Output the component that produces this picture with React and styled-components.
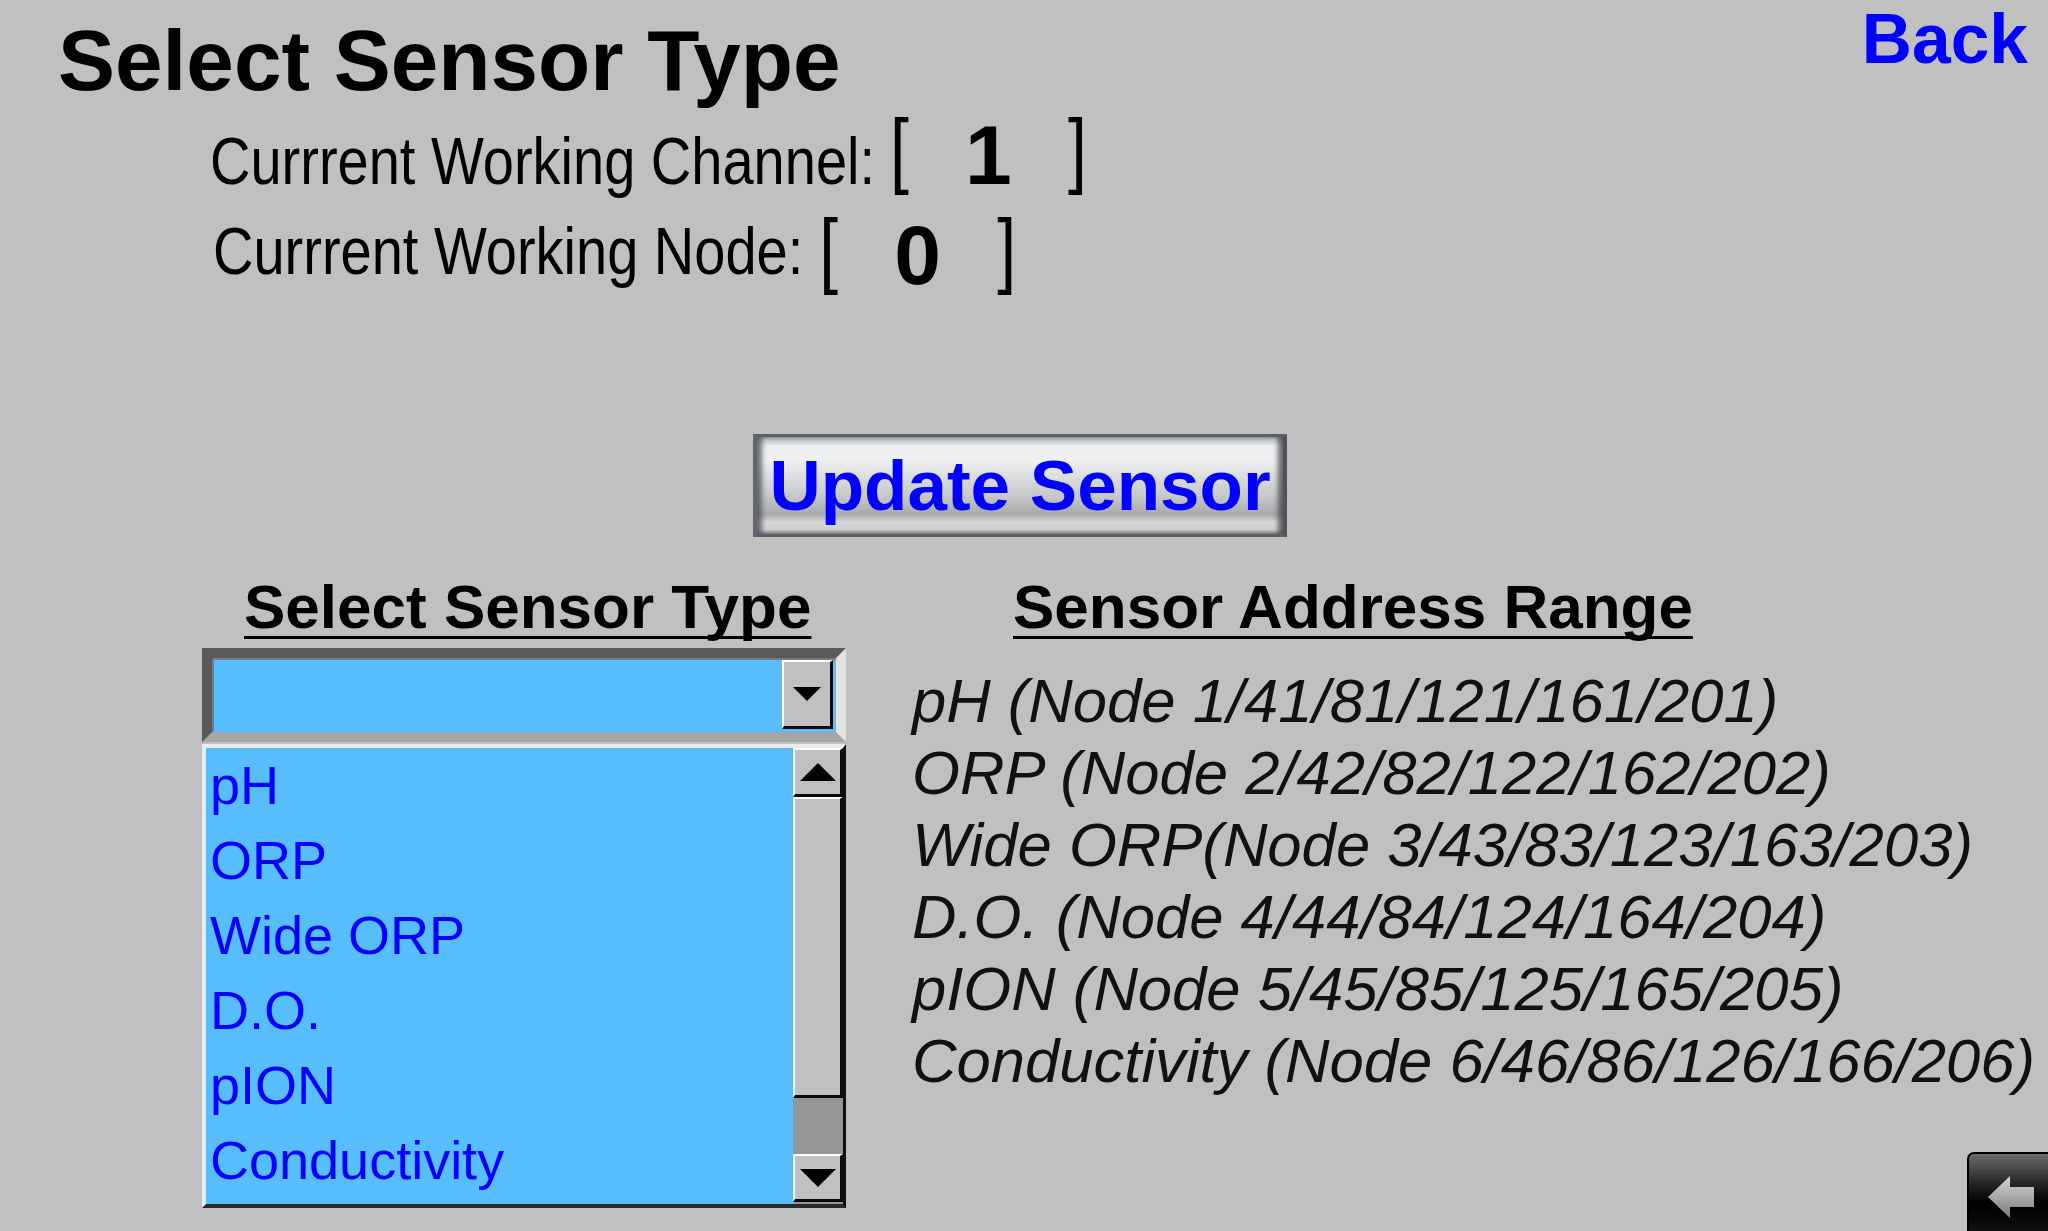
import React from 'react';
import styled, { createGlobalStyle } from 'styled-components';

const GlobalStyle = createGlobalStyle`
    html, body {
        margin: 0;
        padding: 0;
        background: #c0c0c0;
    }

    body {
        width: 2048px;
        height: 1231px;
        overflow: hidden;
        font-family: "Liberation Sans", Arial, sans-serif;
    }
`;

const Screen = styled.div`
    position: relative;
    width: 2048px;
    height: 1231px;
    background: #c0c0c0;
    overflow: hidden;
`;

const Header = styled.div`
    display: flex;
    justify-content: space-between;
    align-items: flex-start;
    padding: 0 20px 0 58px;
`;

const Title = styled.h1`
    margin: 19px 0 0;
    font-size: 85.5px;
    line-height: 84px;
    font-weight: bold;
    color: #000;
`;

const BackLink = styled.a`
    margin-top: 5px;
    font-size: 69.5px;
    line-height: 68px;
    font-weight: bold;
    color: #0000ff;
    text-decoration: none;
    cursor: pointer;
`;

const InfoBlock = styled.div`
    margin-top: 17px;
    padding-left: 210px;
`;

/* the panel font is a narrow face: a smaller size stretched upward from the baseline */
const InfoRow = styled.div`
    height: 90px;
    padding-left: ${props => props.$indent || 0}px;
    font-size: 56px;
    line-height: 90px;
    white-space: nowrap;
    color: #000;
`;

const Label = styled.span`
    display: inline-block;
    transform: scaleY(1.2);
    transform-origin: 0 64.4px;
`;

const ValueGroup = styled.span`
    display: inline-block;
    margin-left: ${props => props.$gap}px;
    line-height: 60px;
    vertical-align: ${props => props.$drop ? -props.$drop : 0}px;
`;

const Bracket = styled.span`
    display: inline-block;
    font-size: 68px;
    line-height: 60px;
    vertical-align: 6px;
    transform: scaleY(1.22);
    transform-origin: 50% 53.5px;
`;

const Value = styled.span`
    display: inline-block;
    width: 159px;
    text-align: center;
    font-size: 84px;
    font-weight: bold;
    line-height: 60px;
`;

const UpdateButton = styled.button`
    display: block;
    box-sizing: border-box;
    width: 534px;
    height: 103px;
    margin: 134px 0 0 753px;
    padding: 0;
    border-style: solid;
    border-width: 3px 4px;
    border-color: #5c6064 #505458 #5c6064 #63676b;
    background: linear-gradient(180deg,
        #a9acaf 0%,
        #eceef0 9%,
        #eef0f2 24%,
        #d6d7d9 46%,
        #c5c6c8 62%,
        #a8a9ab 80%,
        #d8d9db 88%,
        #cfd0d2 95%,
        #8c8f92 100%);
    box-shadow:
        inset 7px 0 5px -2px rgba(70, 74, 78, 0.75),
        inset -7px 0 5px -2px rgba(60, 64, 68, 0.75);
    font-family: "Liberation Sans", Arial, sans-serif;
    font-size: 71px;
    font-weight: bold;
    line-height: 67px;
    color: #0000ff;
    text-align: center;
    white-space: nowrap;
    cursor: pointer;
`;

const Lower = styled.div`
    display: grid;
    grid-template-columns: 644px 1fr;
    column-gap: 66px;
    margin-top: 35px;
    padding-left: 202px;
`;

const Column = styled.div`
    display: flex;
    flex-direction: column;
    align-items: flex-start;
`;

const SectionHeading = styled.h2`
    margin: 0 0 0 ${props => props.$indent}px;
    font-size: 62px;
    line-height: 70px;
    font-weight: bold;
    color: #000;
    white-space: nowrap;
    text-decoration: underline;
    text-decoration-thickness: 3px;
    text-underline-offset: 8px;
    text-decoration-skip-ink: none;
`;

const Combo = styled.div`
    box-sizing: border-box;
    display: flex;
    justify-content: flex-end;
    width: 644px;
    height: 94px;
    margin-top: 6px;
    padding: 2px 3px 3px 0;
    border-style: solid;
    border-width: 10px;
    border-color: #5a5a5a #e2e2e2 #a6a6a6 #5a5a5a;
    box-shadow: inset 2px 2px 0 #7a7a7a;
    background: #57bdfd;
`;

const ArrowButton = styled.div`
    box-sizing: border-box;
    display: flex;
    align-items: center;
    justify-content: center;
    width: ${props => props.$width || 51}px;
    height: ${props => props.$height ? `${props.$height}px` : 'auto'};
    background: #c0c0c0;
    border-style: solid;
    border-width: 2px 3px 3px 2px;
    border-color: #fdfdfd #0a0a0a #0a0a0a #fdfdfd;
`;

const Triangle = styled.span`
    width: 0;
    height: 0;
    border-left: ${props => props.$size}px solid transparent;
    border-right: ${props => props.$size}px solid transparent;
    ${props => props.$up
        ? `border-bottom: ${props.$tall}px solid #000;`
        : `border-top: ${props.$tall}px solid #000;`}
`;

const ListBox = styled.div`
    box-sizing: border-box;
    display: flex;
    width: 644px;
    height: 464px;
    margin-top: 2px;
    border-style: solid;
    border-width: 4px 3px 4px 4px;
    border-color: #ececec #111 #2a2a2a #ececec;
    background: #57bdfd;
`;

const Items = styled.ul`
    flex: 1;
    margin: 0;
    padding: 0 0 0 4px;
    list-style: none;
`;

const Item = styled.li`
    font-size: 54px;
    line-height: 75px;
    color: #0000ff;
    white-space: nowrap;
`;

const ScrollBar = styled.div`
    display: flex;
    flex-direction: column;
    width: 50px;
    padding-bottom: 2px;
    background: #969696;
`;

const Thumb = styled.div`
    box-sizing: border-box;
    height: 301px;
    background: #c0c0c0;
    border-style: solid;
    border-width: 2px 3px 3px 2px;
    border-color: #fdfdfd #0a0a0a #0a0a0a #fdfdfd;
`;

const Track = styled.div`
    flex: 1;
`;

const AddressList = styled.ul`
    margin: 23px 0 0;
    padding: 0;
    list-style: none;
`;

const AddressLine = styled.li`
    font-size: 61.6px;
    font-style: italic;
    line-height: 72px;
    color: #111;
    white-space: nowrap;
`;

const CornerButton = styled.div`
    position: absolute;
    right: -22px;
    bottom: -22px;
    box-sizing: border-box;
    display: flex;
    align-items: flex-start;
    width: 103px;
    height: 101px;
    padding: 21px 0 0 18px;
    border: 2px solid #000;
    border-radius: 7px 0 0 0;
    background: linear-gradient(180deg, #6c6c6c 0%, #262626 30%, #000 50%, #0c0c0c 75%, #2e2e2e 100%);
`;

const sensorTypes = ['pH', 'ORP', 'Wide ORP', 'D.O.', 'pION', 'Conductivity'];

const addressRanges = [
    'pH (Node 1/41/81/121/161/201)',
    'ORP (Node 2/42/82/122/162/202)',
    'Wide ORP(Node 3/43/83/123/163/203)',
    'D.O. (Node 4/44/84/124/164/204)',
    'pION (Node 5/45/85/125/165/205)',
    'Conductivity (Node 6/46/86/126/166/206)',
];

const LeftArrow = () => (
    <svg width="48" height="44" viewBox="0 0 48 44">
        <defs>
            <linearGradient id="arrowFill" x1="0" y1="0" x2="0" y2="1">
                <stop offset="0" stopColor="#d4d4d4" />
                <stop offset="0.5" stopColor="#a8a8a8" />
                <stop offset="1" stopColor="#7a7a7a" />
            </linearGradient>
        </defs>
        <polygon
            points="1,22 23,1 23,12 47,12 47,32 23,32 23,43"
            fill="url(#arrowFill)"
        />
    </svg>
);

const WorkingValue = ({ label, value, indent, gap, drop }) => (
    <InfoRow $indent={indent}>
        <Label>{label}</Label>
        <ValueGroup $gap={gap} $drop={drop}>
            <Bracket>[</Bracket>
            <Value>{value}</Value>
            <Bracket>]</Bracket>
        </ValueGroup>
    </InfoRow>
);

export default function App() {
    return (
        <Screen>
            <GlobalStyle />
            <Header>
                <Title>Select Sensor Type</Title>
                <BackLink>Back</BackLink>
            </Header>

            <InfoBlock>
                <WorkingValue label="Currrent Working Channel:" value="1" gap={15} />
                <WorkingValue label="Currrent Working Node:" value="0" indent={3} gap={16} drop={10} />
            </InfoBlock>

            <UpdateButton>Update Sensor</UpdateButton>

            <Lower>
                <Column>
                    <SectionHeading $indent={42}>Select Sensor Type</SectionHeading>
                    <Combo>
                        <ArrowButton>
                            <Triangle $size={14} $tall={14} />
                        </ArrowButton>
                    </Combo>
                    <ListBox>
                        <Items>
                            {sensorTypes.map(name => (
                                <Item key={name}>{name}</Item>
                            ))}
                        </Items>
                        <ScrollBar>
                            <ArrowButton $width={50} $height={49}>
                                <Triangle $up $size={18} $tall={18} />
                            </ArrowButton>
                            <Thumb />
                            <Track />
                            <ArrowButton $width={50} $height={48}>
                                <Triangle $size={18} $tall={18} />
                            </ArrowButton>
                        </ScrollBar>
                    </ListBox>
                </Column>

                <Column>
                    <SectionHeading $indent={101}>Sensor Address Range</SectionHeading>
                    <AddressList>
                        {addressRanges.map(line => (
                            <AddressLine key={line}>{line}</AddressLine>
                        ))}
                    </AddressList>
                </Column>
            </Lower>

            <CornerButton>
                <LeftArrow />
            </CornerButton>
        </Screen>
    );
}
